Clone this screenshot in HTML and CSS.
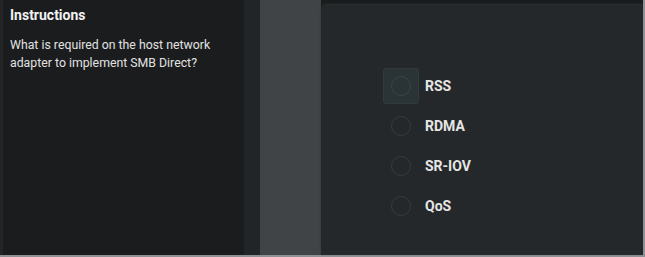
FILE: index.html
```html
<!DOCTYPE html>
<html lang="en">

<head>
  <meta charset="UTF-8">
  <title>Question</title>
  <link rel="stylesheet" href="styles.css">
</head>

<body>
  <div class="frame">
    <div class="edge"></div>

    <div class="sidebar">
      <h2>Instructions</h2>
      <p>What is required on the host network adapter to implement SMB Direct?</p>
    </div>

    <div class="gutter"></div>
    <div class="track"></div>

    <div class="card">
      <div class="options">
        <label class="option focused"><span class="radio-box"><span class="radio"></span></span>RSS</label>
        <label class="option"><span class="radio-box"><span class="radio"></span></span>RDMA</label>
        <label class="option"><span class="radio-box"><span class="radio"></span></span>SR-IOV</label>
        <label class="option"><span class="radio-box"><span class="radio"></span></span>QoS</label>
      </div>
    </div>

    <div class="scrollbar"></div>
  </div>
  <div class="bottom-line"></div>
</body>

</html>
```

FILE: styles.css
```css
body {
  margin: 0;
  font-family: Roboto, "Liberation Sans", sans-serif;
  background: #1b1c1e;
  color: #e6e6e6;
  overflow: hidden;
}

.frame {
  display: flex;
  height: 255px;
}

.edge {
  width: 3px;
  background: #232527;
}

.sidebar {
  width: 229px;
  padding: 6px 5px 0 7px;
  background: #1b1c1e;
}

.sidebar h2 {
  margin: 0;
  font-size: 14px;
  font-weight: 700;
  color: #f2f2f2;
  line-height: 18px;
}

.sidebar p {
  margin: 12px 0 0;
  font-size: 12.3px;
  line-height: 18px;
  color: #e2e2e2;
}

.gutter {
  width: 16px;
  background: #222527;
}

.track {
  width: 61px;
  background: #404447;
}

.card {
  flex: 1;
  margin-top: 5px;
  background: #25282a;
  border-top-left-radius: 6px;
  box-shadow: 0 -1px 2px #2e3234;
  padding: 63px 0 0 62px;
}

.options {
  display: flex;
  flex-direction: column;
  gap: 4px;
}

.option {
  display: flex;
  align-items: center;
  height: 36px;
  font-size: 14px;
  font-weight: 700;
  color: #e6e6e6;
}

.radio-box {
  width: 36px;
  height: 36px;
  margin-right: 6px;
  display: flex;
  align-items: center;
  justify-content: center;
  border-radius: 3px;
  box-sizing: border-box;
}

.option.focused .radio-box {
  background: #2a3335;
  border: 1px solid #323a3c;
}

.radio {
  width: 20px;
  height: 20px;
  border-radius: 50%;
  border: 1.5px solid #383c3e;
  box-sizing: border-box;
}

.option.focused .radio {
  border-color: #3a4446;
}

.scrollbar {
  width: 2px;
  background: #8e9194;
}

.bottom-line {
  height: 2px;
  background: #8e9194;
}
```
